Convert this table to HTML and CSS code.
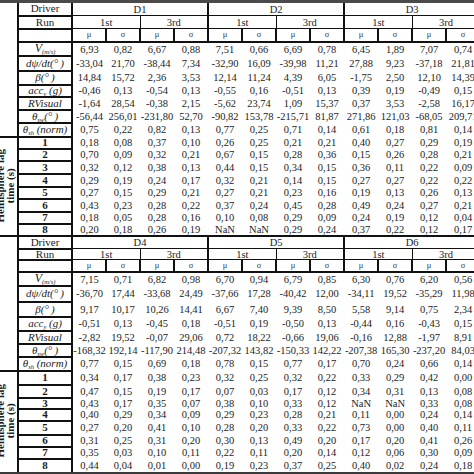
FILE: index.html
```html
<!DOCTYPE html>
<html>
<head>
<meta charset="utf-8">
<link rel="stylesheet" href="styles.css">
</head>
<body>
<div class="sheet">
<table class="stats">
<colgroup><col class="c-side"><col class="c-label"><col span="12" class="c-val"></colgroup>
<tbody class="block top">
<tr class="r-driver h14"><td class="side" rowspan="10"></td><th class="lab">Driver</th><th colspan="4" class="grp">D1</th><th colspan="4" class="grp">D2</th><th colspan="4" class="grp">D3</th></tr>
<tr class="r-run h13"><th class="lab">Run</th><th colspan="2" class="run gs">1st</th><th colspan="2" class="run">3rd</th><th colspan="2" class="run gs">1st</th><th colspan="2" class="run">3rd</th><th colspan="2" class="run gs">1st</th><th colspan="2" class="run">3rd</th></tr>
<tr class="r-stat h13"><th class="lab"></th><th class="st">μ</th><th class="st">σ</th><th class="st">μ</th><th class="st">σ</th><th class="st">μ</th><th class="st">σ</th><th class="st">μ</th><th class="st">σ</th><th class="st">μ</th><th class="st">σ</th><th class="st">μ</th><th class="st">σ</th></tr>
<tr class="h14"><th class="lab"><i class="big">V</i><sub>(m/s)</sub></th><td>6,93</td><td>0,82</td><td>6,67</td><td>0,88</td><td>7,51</td><td>0,66</td><td>6,69</td><td>0,78</td><td>6,45</td><td>1,89</td><td>7,07</td><td>0,74</td></tr>
<tr class="h15"><th class="lab"><i>dψ/dt(°&#8201;)</i></th><td>-33,04</td><td>21,70</td><td>-38,44</td><td>7,34</td><td>-32,90</td><td>16,09</td><td>-39,98</td><td>11,21</td><td>27,88</td><td>9,23</td><td>-37,18</td><td>21,81</td></tr>
<tr class="h14"><th class="lab"><i>β(°&#8201;)</i></th><td>14,84</td><td>15,72</td><td>2,36</td><td>3,53</td><td>12,14</td><td>11,24</td><td>4,39</td><td>6,05</td><td>-1,75</td><td>2,50</td><td>12,10</td><td>14,39</td></tr>
<tr class="h12"><th class="lab"><i>acc</i><sub>y</sub><i>&nbsp;(g)</i></th><td>-0,46</td><td>0,13</td><td>-0,54</td><td>0,13</td><td>-0,55</td><td>0,16</td><td>-0,51</td><td>0,13</td><td>0,39</td><td>0,19</td><td>-0,49</td><td>0,15</td></tr>
<tr class="h13"><th class="lab"><i>RVisual</i></th><td>-1,64</td><td>28,54</td><td>-0,38</td><td>2,15</td><td>-5,62</td><td>23,74</td><td>1,09</td><td>15,37</td><td>0,37</td><td>3,53</td><td>-2,58</td><td>16,17</td></tr>
<tr class="h13"><th class="lab"><i>θ</i><sub>sw</sub><i>(°&#8201;)</i></th><td>-56,44</td><td>256,01</td><td>-231,80</td><td>52,70</td><td>-90,82</td><td>153,78</td><td>-215,71</td><td>81,87</td><td>271,86</td><td>121,03</td><td>-68,05</td><td>209,71</td></tr>
<tr class="h14"><th class="lab"><i>θ</i><sub>sh</sub><i> (norm)</i></th><td>0,75</td><td>0,22</td><td>0,82</td><td>0,13</td><td>0,77</td><td>0,25</td><td>0,71</td><td>0,14</td><td>0,61</td><td>0,18</td><td>0,81</td><td>0,14</td></tr>
<tr class="h12"><td class="side rot" rowspan="8"><span>Hemisphere lag<br>time (s)</span></td><th class="lab num">1</th><td>0,18</td><td>0,08</td><td>0,37</td><td>0,10</td><td>0,26</td><td>0,25</td><td>0,21</td><td>0,21</td><td>0,40</td><td>0,27</td><td>0,29</td><td>0,19</td></tr>
<tr class="h12"><th class="lab num">2</th><td>0,70</td><td>0,09</td><td>0,32</td><td>0,21</td><td>0,67</td><td>0,15</td><td>0,28</td><td>0,36</td><td>0,15</td><td>0,26</td><td>0,28</td><td>0,21</td></tr>
<tr class="h13"><th class="lab num">3</th><td>0,32</td><td>0,12</td><td>0,38</td><td>0,13</td><td>0,44</td><td>0,15</td><td>0,34</td><td>0,15</td><td>0,36</td><td>0,11</td><td>0,22</td><td>0,09</td></tr>
<tr class="h13"><th class="lab num">4</th><td>0,29</td><td>0,19</td><td>0,24</td><td>0,17</td><td>0,32</td><td>0,21</td><td>0,14</td><td>0,15</td><td>0,27</td><td>0,27</td><td>0,22</td><td>0,22</td></tr>
<tr class="h12"><th class="lab num">5</th><td>0,27</td><td>0,15</td><td>0,29</td><td>0,21</td><td>0,27</td><td>0,21</td><td>0,23</td><td>0,16</td><td>0,19</td><td>0,13</td><td>0,26</td><td>0,13</td></tr>
<tr class="h13"><th class="lab num">6</th><td>0,43</td><td>0,23</td><td>0,28</td><td>0,22</td><td>0,37</td><td>0,24</td><td>0,45</td><td>0,28</td><td>0,49</td><td>0,24</td><td>0,27</td><td>0,21</td></tr>
<tr class="h12"><th class="lab num">7</th><td>0,18</td><td>0,05</td><td>0,28</td><td>0,16</td><td>0,10</td><td>0,08</td><td>0,29</td><td>0,09</td><td>0,24</td><td>0,19</td><td>0,12</td><td>0,04</td></tr>
<tr class="h12"><th class="lab num">8</th><td>0,20</td><td>0,18</td><td>0,26</td><td>0,19</td><td>NaN</td><td>NaN</td><td>0,29</td><td>0,24</td><td>0,37</td><td>0,22</td><td>0,12</td><td>0,17</td></tr>
</tbody>
<tbody class="block bottom">
<tr class="r-driver h13"><td class="side" rowspan="10"></td><th class="lab">Driver</th><th colspan="4" class="grp">D4</th><th colspan="4" class="grp">D5</th><th colspan="4" class="grp">D6</th></tr>
<tr class="r-run h11"><th class="lab">Run</th><th colspan="2" class="run gs">1st</th><th colspan="2" class="run">3rd</th><th colspan="2" class="run gs">1st</th><th colspan="2" class="run">3rd</th><th colspan="2" class="run gs">1st</th><th colspan="2" class="run">3rd</th></tr>
<tr class="r-stat h12"><th class="lab"></th><th class="st">μ</th><th class="st">σ</th><th class="st">μ</th><th class="st">σ</th><th class="st">μ</th><th class="st">σ</th><th class="st">μ</th><th class="st">σ</th><th class="st">μ</th><th class="st">σ</th><th class="st">μ</th><th class="st">σ</th></tr>
<tr class="h14"><th class="lab"><i class="big">V</i><sub>(m/s)</sub></th><td>7,15</td><td>0,71</td><td>6,82</td><td>0,98</td><td>6,70</td><td>0,94</td><td>6,79</td><td>0,85</td><td>6,30</td><td>0,76</td><td>6,20</td><td>0,56</td></tr>
<tr class="h16"><th class="lab"><i>dψ/dt(°&#8201;)</i></th><td>-36,70</td><td>17,44</td><td>-33,68</td><td>24,49</td><td>-37,66</td><td>17,28</td><td>-40,42</td><td>12,00</td><td>-34,11</td><td>19,52</td><td>-35,29</td><td>11,98</td></tr>
<tr class="h15"><th class="lab"><i>β(°&#8201;)</i></th><td>9,17</td><td>10,17</td><td>10,26</td><td>14,41</td><td>6,67</td><td>7,40</td><td>9,39</td><td>8,50</td><td>5,58</td><td>9,14</td><td>0,75</td><td>2,34</td></tr>
<tr class="h14"><th class="lab"><i>acc</i><sub>y</sub><i>&nbsp;(g)</i></th><td>-0,51</td><td>0,13</td><td>-0,45</td><td>0,18</td><td>-0,51</td><td>0,19</td><td>-0,50</td><td>0,13</td><td>-0,44</td><td>0,16</td><td>-0,43</td><td>0,15</td></tr>
<tr class="h13"><th class="lab"><i>RVisual</i></th><td>-2,82</td><td>19,52</td><td>-0,07</td><td>29,06</td><td>0,72</td><td>18,22</td><td>-0,66</td><td>19,06</td><td>-0,16</td><td>12,88</td><td>-1,97</td><td>8,91</td></tr>
<tr class="h13"><th class="lab"><i>θ</i><sub>sw</sub><i>(°&#8201;)</i></th><td>-168,32</td><td>192,14</td><td>-117,90</td><td>214,48</td><td>-207,32</td><td>143,82</td><td>-150,33</td><td>142,22</td><td>-207,38</td><td>165,30</td><td>-237,20</td><td>84,03</td></tr>
<tr class="h14"><th class="lab"><i>θ</i><sub>sh</sub><i> (norm)</i></th><td>0,77</td><td>0,15</td><td>0,69</td><td>0,18</td><td>0,78</td><td>0,15</td><td>0,77</td><td>0,17</td><td>0,70</td><td>0,24</td><td>0,66</td><td>0,14</td></tr>
<tr class="h14"><td class="side rot" rowspan="8"><span>Hemisphere lag<br>time (s)</span></td><th class="lab num">1</th><td>0,34</td><td>0,17</td><td>0,38</td><td>0,23</td><td>0,32</td><td>0,25</td><td>0,32</td><td>0,22</td><td>0,33</td><td>0,29</td><td>0,42</td><td>0,00</td></tr>
<tr class="h13"><th class="lab num">2</th><td>0,47</td><td>0,15</td><td>0,19</td><td>0,17</td><td>0,07</td><td>0,03</td><td>0,17</td><td>0,12</td><td>0,34</td><td>0,31</td><td>0,13</td><td>0,08</td></tr>
<tr class="h11"><th class="lab num">3</th><td>0,43</td><td>0,17</td><td>0,35</td><td>0,07</td><td>0,38</td><td>0,10</td><td>0,33</td><td>0,12</td><td>NaN</td><td>NaN</td><td>0,33</td><td>0,08</td></tr>
<tr class="h12"><th class="lab num">4</th><td>0,40</td><td>0,29</td><td>0,34</td><td>0,09</td><td>0,29</td><td>0,23</td><td>0,28</td><td>0,21</td><td>0,11</td><td>0,00</td><td>0,24</td><td>0,14</td></tr>
<tr class="h14"><th class="lab num">5</th><td>0,27</td><td>0,20</td><td>0,41</td><td>0,10</td><td>0,28</td><td>0,20</td><td>0,33</td><td>0,22</td><td>0,73</td><td>0,00</td><td>0,40</td><td>0,11</td></tr>
<tr class="h12"><th class="lab num">6</th><td>0,31</td><td>0,25</td><td>0,31</td><td>0,20</td><td>0,30</td><td>0,13</td><td>0,49</td><td>0,20</td><td>0,17</td><td>0,20</td><td>0,41</td><td>0,26</td></tr>
<tr class="h12"><th class="lab num">7</th><td>0,35</td><td>0,03</td><td>0,10</td><td>0,11</td><td>0,22</td><td>0,11</td><td>0,20</td><td>0,14</td><td>0,12</td><td>0,06</td><td>0,30</td><td>0,09</td></tr>
<tr class="h14 last"><th class="lab num">8</th><td>0,44</td><td>0,04</td><td>0,01</td><td>0,00</td><td>0,19</td><td>0,23</td><td>0,37</td><td>0,25</td><td>0,40</td><td>0,02</td><td>0,24</td><td>0,18</td></tr>
</tbody>
</table>
</div>
</body>
</html>
```

FILE: styles.css
```css
html, body {
  margin: 0;
  padding: 0;
  background: #ffffff;
}

.sheet {
  width: 474px;
  height: 474px;
  overflow: hidden;
  font-family: "Liberation Serif", "Times New Roman", serif;
  color: #1c1c1c;
}

.stats {
  border-collapse: collapse;
  table-layout: fixed;
  width: 488px;
  margin-left: -8px;
  font-size: 10.5px;
  line-height: 9px;
}

.c-side { width: 26px; }
.c-label { width: 54px; }
.c-val { width: 34px; }

.stats td,
.stats th {
  padding: 0;
  text-align: center;
  vertical-align: middle;
  font-weight: normal;
  white-space: nowrap;
  overflow: visible;
}

.h11 { height: 11px; }
.h12 { height: 12px; }
.h13 { height: 13px; }
.h14 { height: 14px; }
.h15 { height: 15px; }
.h16 { height: 16px; }

/* label column boxes */
.lab {
  border: 2px solid #111;
  font-size: 11px;
}

.lab i {
  font-style: italic;
}

.lab .big {
  font-size: 12px;
}

.lab sub {
  font-size: 6.5px;
  font-style: italic;
  vertical-align: -2px;
  line-height: 0;
}

.lab.num {
  font-weight: bold;
  font-size: 11px;
}

/* header cells */
.grp {
  border-left: 2px solid #111;
  border-right: 2px solid #111;
  border-bottom: 1px solid #111;
}

.run {
  border-left: 1px solid #111;
  border-right: 1px solid #111;
  border-bottom: 1px solid #111;
}

.run.gs {
  border-left: 2px solid #111;
}

.st {
  font-size: 8.5px;
  color: #333;
  border-left: 2px solid #111;
  border-right: 2px solid #111;
  border-bottom: 2px solid #111;
}

/* rule lines between blocks */
.top .r-driver > * {
  border-top: 3px solid #4a4a4a;
}

.bottom .r-driver > * {
  border-top: 2px solid #111;
}

.last > *,
.bottom .rot {
  border-bottom: 2px solid #3a3a3a;
}

/* rotated side label */
.side {
  border: none;
}

.rot {
  border-top: 2px solid #111;
  border-right: 2px solid #111;
  text-align: right;
  padding-right: 1px;
}

.rot span {
  display: inline-block;
  writing-mode: vertical-rl;
  transform: rotate(180deg);
  font-weight: bold;
  font-size: 11px;
  line-height: 10px;
  text-align: center;
}
```
